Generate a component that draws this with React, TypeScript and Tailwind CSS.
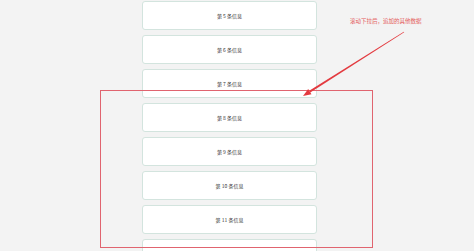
const items = [5, 6, 7, 8, 9, 10, 11, 12];

export default function App() {
  return (
    <div
      className="relative h-[251px] w-[474px] overflow-hidden bg-[#f3f3f3]"
      style={{ fontFamily: '"Noto Sans CJK SC", "Noto Sans", sans-serif' }}
    >
      <div className="ml-[142px] flex w-[175px] flex-col gap-[5px] pt-[1px]">
        {items.map((n) => (
          <div
            key={n}
            className="flex h-[29px] shrink-0 items-center justify-center rounded-[3px] border border-[#d3e4de] bg-white text-[5px] text-[#333]"
          >
            第 {n} 条信息
          </div>
        ))}
      </div>

      {/* annotation */}
      <div className="absolute left-[100px] top-[90px] h-[158px] w-[273px] border-[1.5px] border-[#e0646f]" />
      <div className="absolute left-[350px] top-[19px] text-[5.5px] leading-none text-[#e45a5a]">
        滚动下拉后，追加的其他数据
      </div>
      <svg className="absolute left-0 top-0" width="474" height="251" viewBox="0 0 474 251">
        <polygon
          points="404.2,32.3 403.8,31.7 309.2,90.8 310.3,92.6"
          fill="#e33a3f"
        />
        <polygon points="303,96 311.5,94.3 308.2,89" fill="#e33a3f" />
      </svg>
    </div>
  );
}
